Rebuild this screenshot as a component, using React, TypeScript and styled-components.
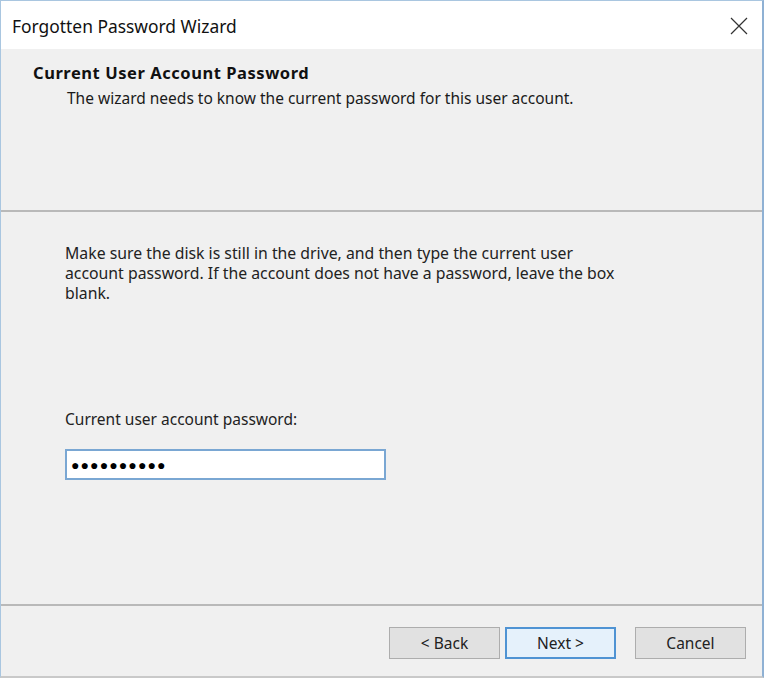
import React from 'react';
import styled, { createGlobalStyle } from 'styled-components';

const font = '"Noto Sans", "Liberation Sans", Arial, sans-serif';

const GlobalStyle = createGlobalStyle`
  html, body {
    margin: 0;
    padding: 0;
    background: #ffffff;
  }
  body {
    font-family: ${font};
    color: #1a1a1a;
  }
`;

const Page = styled.div`
  width: 768px;
  height: 683px;
  box-sizing: border-box;
  padding: 0 4px 5px 0;
  background: #ffffff;
`;

const Window = styled.div`
  height: 100%;
  box-sizing: border-box;
  border: 1px solid #a9c6e0;
  border-right: 2px solid #8fb1d4;
  border-bottom: 2px solid #c9c9c9;
  display: flex;
  flex-direction: column;
  background: #f0f0f0;
`;

const TitleBar = styled.div`
  height: 48px;
  flex: none;
  background: #ffffff;
  display: flex;
  align-items: center;
  justify-content: space-between;
  padding: 1px 12px 0 11px;
  box-sizing: border-box;
`;

const TitleText = styled.span`
  font-size: 17.4px;
  color: #111;
`;

const CloseButton = styled.div`
  width: 22px;
  height: 22px;
  display: flex;
  align-items: center;
  justify-content: center;
`;

const Header = styled.div`
  height: 163px;
  flex: none;
  padding: 14px 0 0 32px;
  box-sizing: border-box;
  border-bottom: 2px solid #b9b9b9;
`;

const HeaderTitle = styled.div`
  font-size: 16.5px;
  line-height: 20px;
  font-weight: bold;
  letter-spacing: 0.55px;
  color: #111;
`;

const HeaderSub = styled.div`
  font-size: 15.5px;
  line-height: 20px;
  padding-left: 34px;
  margin-top: 5px;
  color: #1a1a1a;
`;

const Body = styled.div`
  flex: 1;
  padding: 31px 0 0 64px;
  box-sizing: border-box;
  border-bottom: 2px solid #b9b9b9;
`;

const Paragraph = styled.p`
  margin: 0;
  width: 556px;
  font-size: 15.8px;
  line-height: 20px;
  color: #222;
`;

const FieldLabel = styled.div`
  margin-top: 106px;
  font-size: 15.5px;
  line-height: 20px;
  color: #222;
`;

const PasswordBox = styled.div`
  margin-top: 20px;
  width: 321px;
  height: 31px;
  box-sizing: border-box;
  border: 2px solid #7aa7d3;
  background: #ffffff;
  display: flex;
  align-items: center;
  padding-left: 4px;
  font-family: "Liberation Sans", Arial, sans-serif;
  font-size: 14px;
  letter-spacing: 1.1px;
  color: #000;
`;

const Footer = styled.div`
  height: 70px;
  flex: none;
  display: flex;
  align-items: flex-start;
  justify-content: flex-end;
  padding: 21px 16px 0 0;
  box-sizing: border-box;
`;

const Button = styled.button<{ $primary?: boolean; $gap?: number }>`
  width: 111px;
  height: 32px;
  margin-left: ${p => p.$gap ?? 0}px;
  font-family: ${font};
  font-size: 15.5px;
  color: #222;
  border: ${p => (p.$primary ? '2px solid #4f93d3' : '1px solid #adadad')};
  background: ${p => (p.$primary ? '#e5f1fb' : '#e1e1e1')};
  padding: 0;
`;

export default function App() {
  return (
    <>
      <GlobalStyle />
      <Page>
        <Window>
          <TitleBar>
            <TitleText>Forgotten Password Wizard</TitleText>
            <CloseButton>
              <svg width="18" height="18" viewBox="0 0 18 18">
                <path d="M1 1 L17 17 M17 1 L1 17" stroke="#333" strokeWidth="1.2" fill="none" />
              </svg>
            </CloseButton>
          </TitleBar>
          <Header>
            <HeaderTitle>Current User Account Password</HeaderTitle>
            <HeaderSub>The wizard needs to know the current password for this user account.</HeaderSub>
          </Header>
          <Body>
            <Paragraph>
              Make sure the disk is still in the drive, and then type the current user
              account password. If the account does not have a password, leave the box
              blank.
            </Paragraph>
            <FieldLabel>Current user account password:</FieldLabel>
            <PasswordBox>●●●●●●●●●●</PasswordBox>
          </Body>
          <Footer>
            <Button>&lt; Back</Button>
            <Button $primary $gap={5}>Next &gt;</Button>
            <Button $gap={19}>Cancel</Button>
          </Footer>
        </Window>
      </Page>
    </>
  );
}
